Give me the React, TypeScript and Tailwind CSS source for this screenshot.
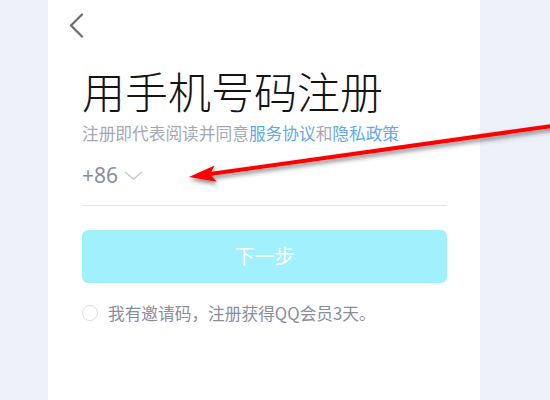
import React from 'react';

const cjk = { fontFamily: '"Noto Sans CJK SC", "Noto Sans", sans-serif' };

function BackIcon() {
  return (
    <svg width="16" height="25" viewBox="0 0 16 25" fill="none">
      <polyline
        points="14,1.5 3,12.5 14,23.5"
        stroke="#6b6b6b"
        strokeWidth="2.2"
        strokeLinecap="round"
        strokeLinejoin="round"
      />
    </svg>
  );
}

function RedArrow() {
  return (
    <svg
      className="absolute inset-0 pointer-events-none"
      width="550"
      height="400"
      viewBox="0 0 550 400"
    >
      <defs>
        <filter id="arrowShadow" x="-10%" y="-50%" width="120%" height="200%">
          <feDropShadow dx="1" dy="3" stdDeviation="2" floodColor="#333" floodOpacity="0.55" />
        </filter>
      </defs>
      <g filter="url(#arrowShadow)">
        <line x1="210" y1="174" x2="556" y2="125.5" stroke="#ff0000" strokeWidth="4" />
        <polygon points="189,177 214.6,165.4 210,174.2 216.8,181.8" fill="#ff0000" />
      </g>
    </svg>
  );
}

export default function App() {
  return (
    <div className="relative w-[550px] h-[400px] overflow-hidden bg-[#ecf1f9] flex" style={cjk}>
      <div className="w-[48px] shrink-0" />
      <div className="w-[432px] h-full bg-white pl-[34px] pr-[33px] pt-[13px] flex flex-col">
        <div className="-ml-[14px] w-[16px]">
          <BackIcon />
        </div>

        <h1 className="mt-[31px] text-[43px] leading-none font-light text-[#141414]">
          用手机号码注册
        </h1>

        <p className="mt-[13px] text-[16.7px] leading-none text-[#a4a8b4] whitespace-nowrap">
          注册即代表阅读并同意
          <span className="text-[#5fa9ee]">服务协议</span>和
          <span className="text-[#5fa9ee]">隐私政策</span>
        </p>

        <div className="mt-[20px] h-[44px] pt-[3px] flex items-start border-b border-[#e6e6e8]">
          <span
            className="text-[21px] leading-none text-[#8a8e9b]"
            style={{ fontFamily: '"Noto Sans", sans-serif' }}
          >
            +86
          </span>
          <svg className="ml-[6px] mt-[6px]" width="19" height="9" viewBox="0 0 19 9" fill="none">
            <polyline points="1,1 9.5,8 18,1" stroke="#c4c7ce" strokeWidth="1.4" />
          </svg>
        </div>

        <button className="mt-[24px] h-[53px] w-full rounded-[6px] bg-[#a0f0fd] text-white text-[20px] leading-none">
          下一步
        </button>

        <div className="mt-[22px] flex items-center">
          <span className="w-[16px] h-[16px] rounded-full border border-[#dcdde2] shrink-0" />
          <span className="ml-[10px] text-[16.7px] leading-none text-[#8a8e9b] whitespace-nowrap">
            我有邀请码，注册获得QQ会员3天。
          </span>
        </div>
      </div>
      <div className="flex-1" />
      <RedArrow />
    </div>
  );
}
